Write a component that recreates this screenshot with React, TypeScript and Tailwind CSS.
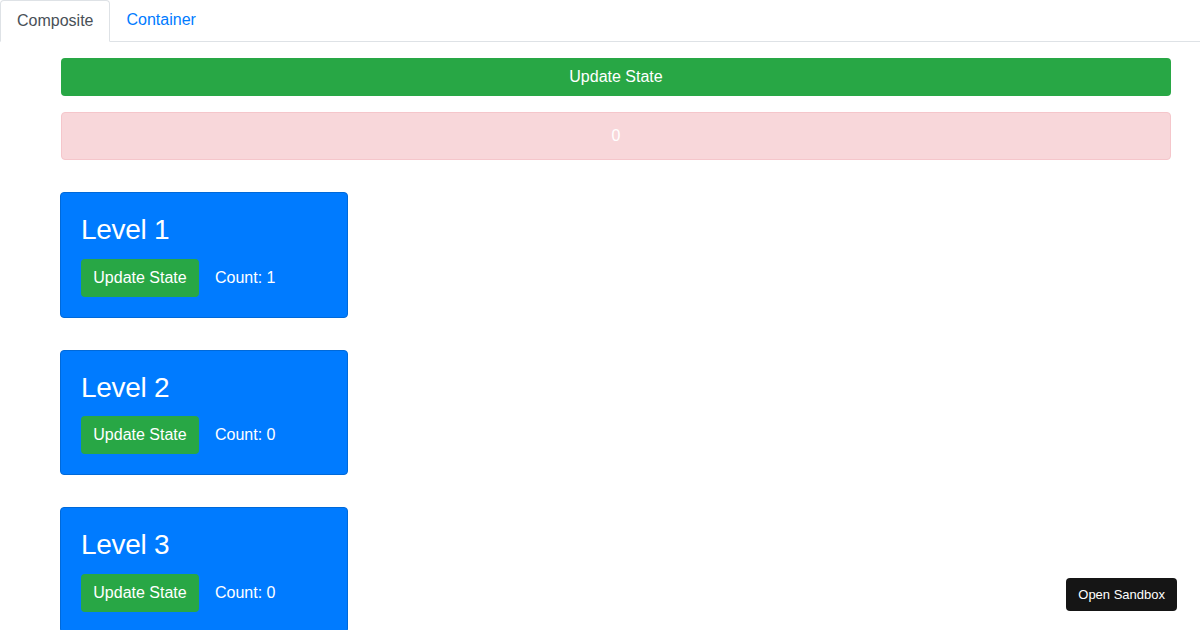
const font = { fontFamily: '"Liberation Sans", Arial, sans-serif' };

function Level({ n, count }: { n: number; count: number }) {
  return (
    <div className="w-[288px] rounded-[4px] border border-[#0069d9] bg-[#007bff] px-5 pt-5 pb-5 text-white">
      <h3 className="mb-[12px] text-[28px] leading-[33.6px] tracking-[-0.3px]">Level {n}</h3>
      <div className="flex items-center gap-4">
        <button className="h-[38px] w-[118px] rounded-[4px] bg-[#28a745] text-[16px] text-white">
          Update State
        </button>
        <span className="text-[16px]">Count: {count}</span>
      </div>
    </div>
  );
}

export default function App() {
  return (
    <div className="relative h-[630px] w-[1200px] overflow-hidden bg-white text-[#212529]" style={font}>
      <div className="flex border-b border-[#dee2e6] text-[16px]">
        <div className="-mb-px rounded-t-[4px] border border-[#dee2e6] border-b-white bg-white px-4 py-[8px] leading-6 text-[#495057]">
          Composite
        </div>
        <div className="px-4 py-[8px] leading-6 text-[#007bff]">Container</div>
      </div>

      <div className="pl-[61px] pr-[29px] pt-4">
        <button className="h-[38px] w-full rounded-[4px] bg-[#28a745] text-[16px] text-white">
          Update State
        </button>
        <div className="mt-4 h-[48px] rounded-[4px] border border-[#f5c6cb] bg-[#f8d7da] text-center text-[16px] leading-[46px] text-white">
          0
        </div>
      </div>

      <div className="ml-[60px] mt-[32px] flex flex-col gap-[32px]">
        <Level n={1} count={1} />
        <Level n={2} count={0} />
        <Level n={3} count={0} />
      </div>

      <button className="absolute bottom-[19px] right-[23px] h-[33px] rounded-[4px] bg-[#151515] px-[12px] text-[13px] text-white">
        Open Sandbox
      </button>
    </div>
  );
}
